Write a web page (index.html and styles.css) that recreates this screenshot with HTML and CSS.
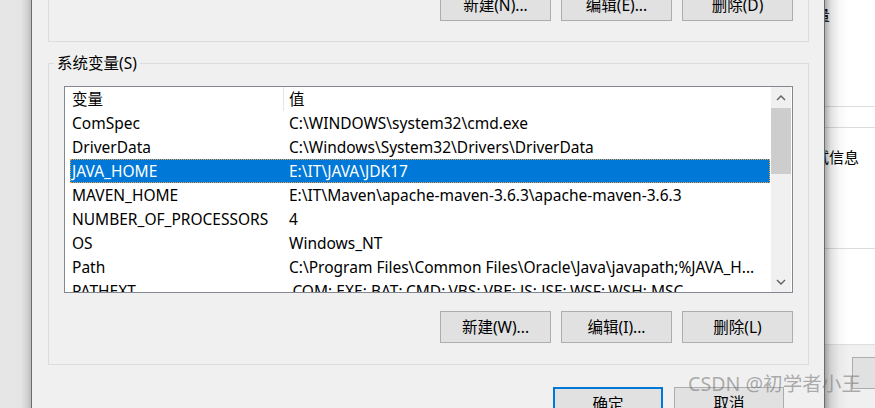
FILE: index.html
```html
<!DOCTYPE html>
<html lang="zh-CN">
<head>
<meta charset="utf-8">
<title>环境变量</title>
<link rel="stylesheet" href="styles.css">
</head>
<body>
<div class="screen">
  <div class="backdrop-left"></div>

  <div class="dialog">
    <div class="group group-user">
      <div class="btn-row">
        <button class="btn">新建(N)...</button>
        <button class="btn">编辑(E)...</button>
        <button class="btn">删除(D)</button>
      </div>
    </div>

    <fieldset class="group group-sys">
      <legend class="group-title">系统变量(S)</legend>
      <div class="listview">
        <div class="lv-main">
          <div class="lv-header">
            <div class="hd-name">变量</div>
            <div class="hd-value">值</div>
          </div>
          <div class="lv-row"><div class="c-name">ComSpec</div><div class="c-value">C:\WINDOWS\system32\cmd.exe</div></div>
          <div class="lv-row"><div class="c-name">DriverData</div><div class="c-value">C:\Windows\System32\Drivers\DriverData</div></div>
          <div class="lv-row is-selected"><div class="c-name">JAVA_HOME</div><div class="c-value">E:\IT\JAVA\JDK17</div></div>
          <div class="lv-row"><div class="c-name">MAVEN_HOME</div><div class="c-value">E:\IT\Maven\apache-maven-3.6.3\apache-maven-3.6.3</div></div>
          <div class="lv-row"><div class="c-name">NUMBER_OF_PROCESSORS</div><div class="c-value">4</div></div>
          <div class="lv-row"><div class="c-name">OS</div><div class="c-value">Windows_NT</div></div>
          <div class="lv-row"><div class="c-name">Path</div><div class="c-value">C:\Program Files\Common Files\Oracle\Java\javapath;%JAVA_H...</div></div>
          <div class="lv-row"><div class="c-name">PATHEXT</div><div class="c-value">.COM;.EXE;.BAT;.CMD;.VBS;.VBE;.JS;.JSE;.WSF;.WSH;.MSC</div></div>
        </div>
        <div class="scrollbar">
          <div class="sb-btn">
            <svg width="10" height="6" viewBox="0 0 10 6"><polyline points="1,5 5,1 9,5" fill="none" stroke="#606060" stroke-width="1.4"/></svg>
          </div>
          <div class="sb-track"><div class="sb-thumb"></div></div>
          <div class="sb-btn">
            <svg width="10" height="6" viewBox="0 0 10 6"><polyline points="1,1 5,5 9,1" fill="none" stroke="#606060" stroke-width="1.4"/></svg>
          </div>
        </div>
      </div>
      <div class="btn-row btn-row-sys">
        <button class="btn">新建(W)...</button>
        <button class="btn">编辑(I)...</button>
        <button class="btn">删除(L)</button>
      </div>
    </fieldset>

    <div class="btn-row dialog-actions">
      <button class="btn btn-default">确定</button>
      <button class="btn">取消</button>
    </div>
  </div>

  <div class="backdrop-right">
    <div class="bg-sec bg-sec1"><span class="bg-text bg-text1">变量</span></div>
    <div class="bg-sec bg-sec2"></div>
    <div class="bg-sec bg-sec3"><span class="bg-text bg-text2">调试信息</span></div>
    <div class="bg-sec bg-sec4"></div>
    <div class="bg-footer"><div class="bg-btn"></div></div>
  </div>

  <div class="watermark">CSDN @初学者小王</div>
</div>
</body>
</html>
```

FILE: styles.css
```css
html, body {
  margin: 0;
  padding: 0;
}

body {
  width: 875px;
  height: 408px;
  overflow: hidden;
  background: #ffffff;
  font-family: "Noto Sans", "Noto Sans CJK SC", sans-serif;
  font-size: 15.5px;
  color: #000;
}

.screen {
  position: relative;
  display: flex;
  width: 875px;
  height: 408px;
  overflow: hidden;
}

.backdrop-left {
  width: 31px;
  flex: none;
  background: linear-gradient(to right, #e6e6e6 0, #e5e5e5 21px, #d2d2d2 27px, #bdbdbd 31px);
}

.dialog {
  flex: none;
  background: #f0f0f0;
  border-left: 1px solid #6c6c6c;
  border-right: 1px solid #6c6c6c;
  padding: 0 15px 0 16px;
  box-sizing: border-box;
  width: 794px;
}

.group {
  border: 1px solid #dcdcdc;
  box-sizing: border-box;
}

.group-user {
  margin-top: -30px;
  padding: 18px 15px 20px 15px;
}

.btn-row {
  display: flex;
  justify-content: flex-end;
  gap: 10px;
}

.btn {
  width: 111px;
  height: 32px;
  box-sizing: border-box;
  border: 1px solid #adadad;
  background: #e1e1e1;
  font-family: "Noto Sans", "Noto Sans CJK SC", sans-serif;
  font-size: 15.5px;
  color: #000;
  padding: 0;
  line-height: 30px;
  white-space: nowrap;
}

.group-sys {
  margin: 11px 0 0 0;
  padding: 13px 15px 21px 15px;
  min-inline-size: 0;
}

.group-title {
  margin-left: -10px;
  padding: 0 3px;
  line-height: 20px;
  font-size: 15.5px;
}

.listview {
  display: flex;
  height: 207px;
  box-sizing: border-box;
  border: 1px solid #828790;
  background: #fff;
}

.lv-main {
  width: 705px;
  flex: none;
  overflow: hidden;
}

.lv-header {
  display: flex;
  height: 24px;
  line-height: 24px;
}

.hd-name {
  width: 219px;
  box-sizing: border-box;
  padding-left: 7px;
  border-right: 1px solid #e5e5e5;
}

.hd-value {
  padding-left: 5px;
}

.lv-row {
  display: flex;
  height: 24px;
  line-height: 24px;
  margin-left: 5px;
  width: 700px;
  white-space: nowrap;
}

.c-name {
  width: 213px;
  flex: none;
  box-sizing: border-box;
  padding-left: 2px;
  overflow: hidden;
}

.c-value {
  flex: 1;
  padding-left: 6px;
  overflow: hidden;
}

.lv-row.is-selected {
  background: #0078d7;
  color: #fff;
  outline: 1px dotted #f0a040;
  outline-offset: -1px;
}

.scrollbar {
  flex: 1;
  display: flex;
  flex-direction: column;
  padding: 0 1px;
  background: #fff;
}

.sb-btn {
  height: 21px;
  flex: none;
  background: #f0f0f0;
  display: flex;
  align-items: center;
  justify-content: center;
}

.sb-track {
  flex: 1;
  background: #f0f0f0;
}

.sb-thumb {
  height: 66px;
  background: #cdcdcd;
}

.btn-row-sys {
  margin-top: 18px;
}

.dialog-actions {
  margin-top: 22px;
  margin-right: 25px;
  gap: 11px;
}

.dialog-actions .btn {
  width: 110px;
}

.btn-default {
  border: 2px solid #0078d7;
}

.backdrop-right {
  position: relative;
  flex: 1;
  display: flex;
  flex-direction: column;
  overflow: hidden;
  background: #fff;
}

.backdrop-right::after {
  content: "";
  position: absolute;
  left: 0;
  top: 0;
  bottom: 0;
  width: 24px;
  background: linear-gradient(to right, rgba(0,0,0,0.32) 0, rgba(0,0,0,0.12) 6px, rgba(0,0,0,0.03) 14px, rgba(0,0,0,0) 24px);
  pointer-events: none;
}

.bg-sec {
  box-sizing: border-box;
  flex: none;
}

.bg-sec1 { height: 106px; }
.bg-sec2 { height: 21px; border-top: 1px solid #dcdcdc; }
.bg-sec3 { height: 121px; border-top: 1px solid #dcdcdc; padding-top: 19px; }
.bg-sec4 { height: 96px; border-top: 1px solid #dcdcdc; }

.bg-text {
  display: block;
  white-space: nowrap;
  font-family: "Noto Sans CJK SC", sans-serif;
  font-size: 15px;
}

.bg-text1 {
  margin-left: -25px;
  line-height: 30px;
}

.bg-text2 {
  margin-left: -26px;
  line-height: 20px;
}

.bg-footer {
  flex: 1;
  background: #f0f0f0;
  border-top: 1px solid #dfdfdf;
  padding: 12px 0 0 27px;
}

.bg-btn {
  width: 60px;
  height: 32px;
  box-sizing: border-box;
  border: 1px solid #adadad;
  background: #e1e1e1;
}

.watermark {
  position: absolute;
  left: 688px;
  top: 371px;
  font-family: "Noto Sans", "Noto Sans CJK SC", sans-serif;
  font-size: 19.6px;
  line-height: 26px;
  color: rgba(110, 110, 110, 0.55);
  white-space: nowrap;
  pointer-events: none;
}
```
